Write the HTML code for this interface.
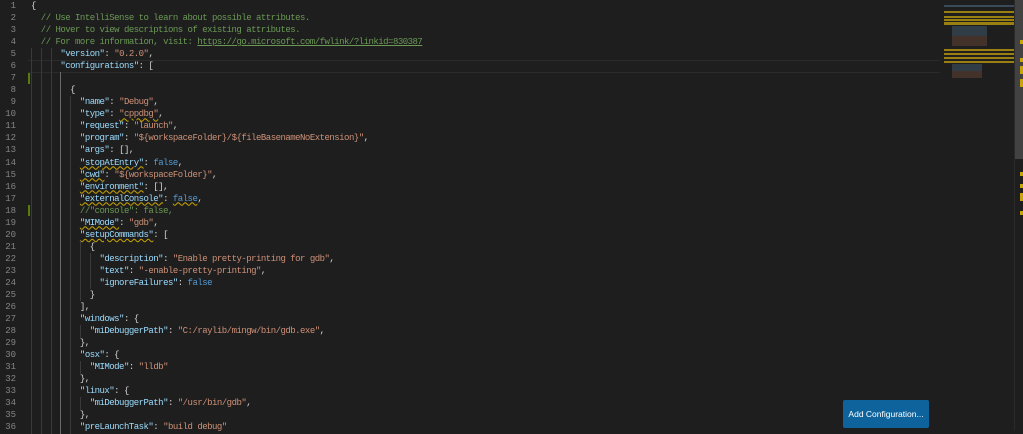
<!DOCTYPE html>
<html><head><meta charset="utf-8"><style>
html,body{margin:0;padding:0;background:#1e1e1e;width:1023px;height:430px;overflow:hidden}
#ed{position:absolute;left:0;top:0;width:1023px;height:430px;font-family:"Liberation Mono",monospace;font-size:9px;letter-spacing:-0.51px}
.ln{position:absolute;left:0;width:16px;text-align:right;color:#858585;line-height:12.04px;height:12.04px;letter-spacing:0}
.cl{position:absolute;left:31px;white-space:pre;color:#d4d4d4;line-height:12.04px;height:12.04px}
.k{color:#9cdcfe}.s{color:#ce9178}.c{color:#6a9955}.b{color:#569cd6}
.u{text-decoration:underline;text-decoration-color:#6a9955}
.w{text-decoration:underline wavy #cca700;text-decoration-thickness:1px}
.g{position:absolute;width:1px;background:#3a3a3a}
</style></head><body><div id="ed">
<div style="position:absolute;left:28px;top:60px;width:912px;height:11px;border-top:1px solid #2b2b2b;border-bottom:1px solid #2b2b2b"></div>
<div style="position:absolute;left:28px;top:73px;width:2px;height:11px;background:#587c0c"></div>
<div style="position:absolute;left:28px;top:205px;width:2px;height:11px;background:#587c0c"></div>
<div id="lines"></div>
<div style="position:absolute;left:940px;top:0;width:75px;height:80px">
<div style="position:absolute;left:4px;top:5px;width:70px;height:2px;background:#3a4a5a"></div>
<div style="position:absolute;left:4px;top:11px;width:70px;height:2px;background:#9a8010"></div>
<div style="position:absolute;left:4px;top:16px;width:70px;height:2px;background:#9a8010"></div>
<div style="position:absolute;left:4px;top:19px;width:70px;height:2px;background:#9a8010"></div>
<div style="position:absolute;left:4px;top:22px;width:70px;height:3px;background:#9a8010"></div>
<div style="position:absolute;left:4px;top:49px;width:70px;height:2px;background:#9a8010"></div>
<div style="position:absolute;left:4px;top:53px;width:70px;height:2px;background:#9a8010"></div>
<div style="position:absolute;left:4px;top:57px;width:70px;height:2px;background:#9a8010"></div>
<div style="position:absolute;left:4px;top:61px;width:70px;height:2px;background:#9a8010"></div>
<div style="position:absolute;left:12px;top:26px;width:35px;height:20px;background:linear-gradient(#3c5060 0 50%,#5a4030 50%);opacity:.6"></div>
<div style="position:absolute;left:12px;top:64px;width:30px;height:14px;background:linear-gradient(#3c5060 0 50%,#5a4030 50%);opacity:.6"></div>
</div>
<div style="position:absolute;left:1015px;top:0;width:8px;height:159px;background:#424242"></div>
<div style="position:absolute;left:1014px;top:0;width:1px;height:430px;background:#2a2a2a"></div>
<div style="position:absolute;left:1020px;top:40px;width:3px;height:4px;background:#c9a50a"></div>
<div style="position:absolute;left:1020px;top:58px;width:3px;height:4px;background:#c9a50a"></div>
<div style="position:absolute;left:1020px;top:66px;width:3px;height:8px;background:#c9a50a"></div>
<div style="position:absolute;left:1020px;top:79px;width:3px;height:8px;background:#c9a50a"></div>
<div style="position:absolute;left:1020px;top:172px;width:3px;height:4px;background:#c9a50a"></div>
<div style="position:absolute;left:1020px;top:184px;width:3px;height:4px;background:#c9a50a"></div>
<div style="position:absolute;left:1020px;top:193px;width:3px;height:8px;background:#c9a50a"></div>
<div style="position:absolute;left:1020px;top:211px;width:3px;height:4px;background:#c9a50a"></div>
<div style="position:absolute;left:843px;top:400px;width:86px;height:28px;background:#0e639c;border-radius:2px;color:#fff;font-family:'Liberation Sans',sans-serif;font-size:8.5px;letter-spacing:0;line-height:28px;text-align:center">Add Configuration...</div>
</div>
<script>
var L=[
'{',
'  <span class="c">// Use IntelliSense to learn about possible attributes.</span>',
'  <span class="c">// Hover to view descriptions of existing attributes.</span>',
'  <span class="c">// For more information, visit: <span class="u">https://go.microsoft.com/fwlink/?linkid=830387</span></span>',
'      <span class="k">"version"</span>: <span class="s">"0.2.0"</span>,',
'      <span class="k">"configurations"</span>: [',
'        ',
'        {',
'          <span class="k">"name"</span>: <span class="s">"Debug"</span>,',
'          <span class="k">"type"</span>: <span class="s w">"cppdbg"</span>,',
'          <span class="k">"request"</span>: <span class="s">"launch"</span>,',
'          <span class="k">"program"</span>: <span class="s">"${workspaceFolder}/${fileBasenameNoExtension}"</span>,',
'          <span class="k">"args"</span>: [],',
'          <span class="k w">"stopAtEntry"</span>: <span class="b">false</span>,',
'          <span class="k w">"cwd"</span>: <span class="s">"${workspaceFolder}"</span>,',
'          <span class="k w">"environment"</span>: [],',
'          <span class="k w">"externalConsole"</span>: <span class="b w">false</span>,',
'          <span class="c">//"console": false,</span>',
'          <span class="k w">"MIMode"</span>: <span class="s">"gdb"</span>,',
'          <span class="k w">"setupCommands"</span>: [',
'            {',
'              <span class="k">"description"</span>: <span class="s">"Enable pretty-printing for gdb"</span>,',
'              <span class="k">"text"</span>: <span class="s">"-enable-pretty-printing"</span>,',
'              <span class="k">"ignoreFailures"</span>: <span class="b">false</span>',
'            }',
'          ],',
'          <span class="k">"windows"</span>: {',
'            <span class="k">"miDebuggerPath"</span>: <span class="s">"C:/raylib/mingw/bin/gdb.exe"</span>,',
'          },',
'          <span class="k">"osx"</span>: {',
'            <span class="k">"MIMode"</span>: <span class="s">"lldb"</span>',
'          },',
'          <span class="k">"linux"</span>: {',
'            <span class="k">"miDebuggerPath"</span>: <span class="s">"/usr/bin/gdb"</span>,',
'          },',
'          <span class="k">"preLaunchTask"</span>: <span class="s">"build debug"</span>'
];
var h='',lh=12.04,cw=4.89;
for(var i=0;i<L.length;i++){
 var t=i*lh;
 h+='<div class="ln" style="top:'+t+'px">'+(i+1)+'</div>';
 var m=L[i].match(/^ */)[0].length;
 if(i==6)m=8;
 for(var c=0;c<m;c+=2){
  if(i<4)continue;
  var col=(c==6&&i>=6)?'#6a6a6a':'#3a3a3a';
  h+='<div class="g" style="left:'+(31+c*cw)+'px;top:'+t+'px;height:'+(lh+0.5)+'px;background:'+col+'"></div>';
 }
 h+='<div class="cl" style="top:'+t+'px">'+L[i]+'</div>';
}
document.getElementById('lines').innerHTML=h;
</script>
</body></html>
